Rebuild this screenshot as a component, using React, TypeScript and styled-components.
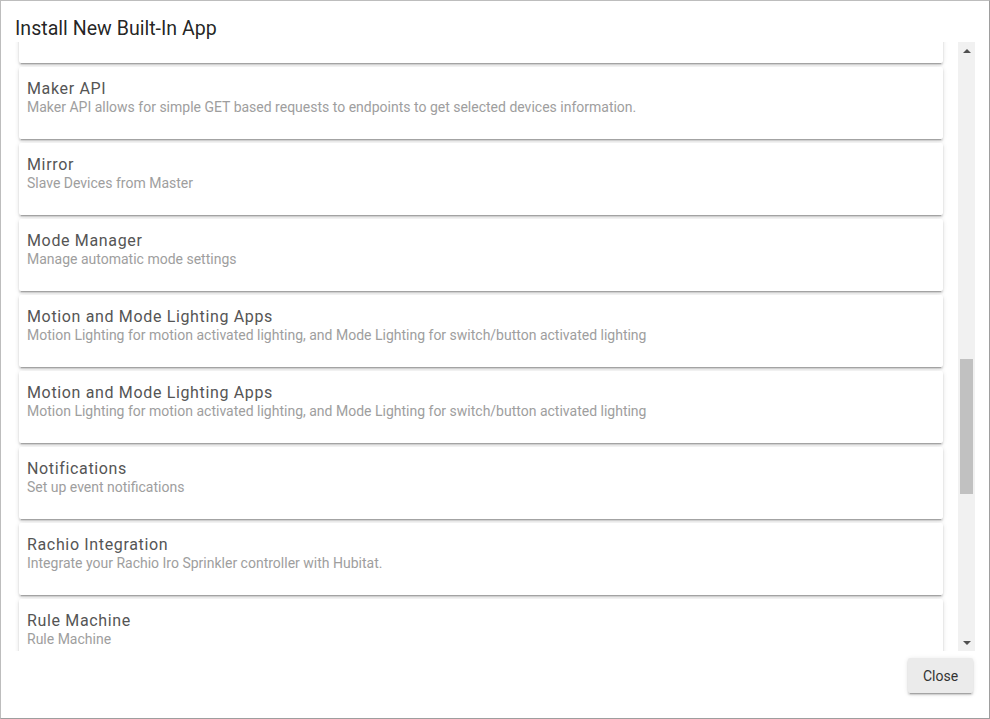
import { useLayoutEffect, useRef, useState } from "react";
import styled, { createGlobalStyle } from "styled-components";

type BuiltInApp = {
  name: string;
  description: string;
};

const apps: BuiltInApp[] = [
  { name: "Amazon Echo Skill", description: "Integrate Hubitat with Amazon Echo devices" },
  { name: "Average Temperature", description: "Average the readings of several temperature sensors" },
  { name: "Button Controllers", description: "Control devices with buttons" },
  { name: "Chromecast Integration", description: "Discover and control Chromecast devices" },
  { name: "Color Temperature Adjustment", description: "Adjust color temperature of bulbs during the day" },
  { name: "Ecobee Integration", description: "Connect your Ecobee thermostats" },
  { name: "Google Home", description: "Integrate Hubitat with Google Home" },
  { name: "Groups and Scenes", description: "Create groups of devices and scenes" },
  { name: "Hubitat Dashboard", description: "Create dashboards to control your devices" },
  { name: "Hubitat Safety Monitor", description: "Monitor intrusion, smoke and water leaks" },
  { name: "Hub Link", description: "Send device events to another hub" },
  { name: "IFTTT Integration", description: "Connect Hubitat with IFTTT" },
  { name: "LIFX Integration", description: "Discover and control LIFX bulbs" },
  { name: "Link to Hub", description: "Receive device events from another hub" },
  { name: "Lock Code Manager", description: "Manage lock codes for your locks" },
  { name: "Lutron Integration", description: "Connect your Lutron bridge" },
  { name: "Lighting Overrides", description: "Override lighting levels by mode" },
  { name: "Location Events", description: "Log sunrise, sunset and mode events" },
  {
    name: "Maker API",
    description:
      "Maker API allows for simple GET based requests to endpoints to get selected devices information.",
  },
  { name: "Mirror", description: "Slave Devices from Master" },
  { name: "Mode Manager", description: "Manage automatic mode settings" },
  {
    name: "Motion and Mode Lighting Apps",
    description:
      "Motion Lighting for motion activated lighting, and Mode Lighting for switch/button activated lighting",
  },
  {
    name: "Motion and Mode Lighting Apps",
    description:
      "Motion Lighting for motion activated lighting, and Mode Lighting for switch/button activated lighting",
  },
  { name: "Notifications", description: "Set up event notifications" },
  { name: "Rachio Integration", description: "Integrate your Rachio Iro Sprinkler controller with Hubitat." },
  { name: "Rule Machine", description: "Rule Machine" },
  { name: "Safety Monitor", description: "Security and safety alerts" },
  { name: "Simple Automation Rules", description: "Simple rules for everyday automations" },
  { name: "Sonos Integration", description: "Discover and control Sonos speakers" },
  { name: "Thermostat Controller", description: "Control a thermostat from several sensors" },
  { name: "Thermostat Scheduler", description: "Schedule thermostat set points" },
  { name: "Visual Rules Builder", description: "Build rules visually" },
  { name: "Weather Alerts", description: "Get notified about weather conditions" },
  { name: "Zone Motion Controllers", description: "Combine motion sensors into zones" },
];

const FIRST_VISIBLE = "Maker API";
const FIRST_VISIBLE_TOP = 25;

const GlobalStyle = createGlobalStyle`
  html, body {
    margin: 0;
    padding: 0;
    background: #fafafa;
    font-family: Roboto, "Liberation Sans", Arial, sans-serif;
  }
  * {
    box-sizing: border-box;
  }
`;

const Dialog = styled.div`
  width: 990px;
  height: 719px;
  display: flex;
  flex-direction: column;
  background: #fff;
  border: 1px solid #bdbdbd;
  border-right-color: #9e9e9e;
  border-bottom-color: #9e9e9e;
  overflow: hidden;
`;

const Title = styled.h2`
  margin: 0;
  padding: 16px 14px 0;
  height: 41px;
  font-size: 19.6px;
  font-weight: 400;
  line-height: 24px;
  color: rgba(0, 0, 0, 0.87);
`;

const Body = styled.div`
  flex: 1;
  min-height: 0;
  display: flex;
  padding: 0 14px;
`;

const List = styled.div`
  flex: 1;
  min-width: 0;
  overflow-y: scroll;
  scrollbar-width: none;
  padding: 4px 15px 0 4px;
  display: flex;
  flex-direction: column;
  gap: 4px;

  &::-webkit-scrollbar {
    display: none;
  }
`;

const Card = styled.div`
  flex: none;
  height: 72px;
  padding: 12px 8px 10px;
  background: #fff;
  border-radius: 2px;
  box-shadow: 0 3px 1px -2px rgba(0, 0, 0, 0.2), 0 2px 2px 0 rgba(0, 0, 0, 0.14),
    0 1px 5px 0 rgba(0, 0, 0, 0.12);
  cursor: pointer;
`;

const AppName = styled.div`
  font-size: 16px;
  line-height: 19px;
  letter-spacing: 0.65px;
  color: #555;
`;

const AppDescription = styled.div`
  font-size: 14px;
  line-height: 18px;
  color: #9e9e9e;
`;

const Track = styled.div`
  flex: none;
  width: 17px;
  display: flex;
  flex-direction: column;
  background: #f1f1f1;
`;

const ArrowButton = styled.div`
  flex: none;
  height: 17px;
  display: flex;
  align-items: center;
  justify-content: center;
`;

const Arrow = styled.span<{ $down?: boolean }>`
  width: 0;
  height: 0;
  border-left: 4px solid transparent;
  border-right: 4px solid transparent;
  ${({ $down }) =>
    $down ? "border-top: 4px solid #505050;" : "border-bottom: 4px solid #505050;"}
`;

const ThumbArea = styled.div`
  flex: 1;
  position: relative;
`;

const Thumb = styled.div`
  position: absolute;
  left: 2px;
  right: 2px;
  background: #c1c1c1;
`;

const Footer = styled.div`
  flex: none;
  height: 67px;
  display: flex;
  justify-content: flex-end;
  align-items: flex-start;
  padding: 7px 16px 0;
`;

const CloseButton = styled.button`
  width: 65px;
  height: 35px;
  border: none;
  border-radius: 2px;
  background: #ebebeb;
  color: #333;
  font-family: Roboto, "Liberation Sans", Arial, sans-serif;
  font-size: 14px;
  cursor: pointer;
  box-shadow: 0 3px 1px -2px rgba(0, 0, 0, 0.2), 0 2px 2px 0 rgba(0, 0, 0, 0.14),
    0 1px 5px 0 rgba(0, 0, 0, 0.12);
`;

export default function App() {
  const listRef = useRef<HTMLDivElement | null>(null);
  const anchorRef = useRef<HTMLDivElement | null>(null);
  const [scroll, setScroll] = useState({ top: 0, client: 1, total: 1 });

  const measure = () => {
    const list = listRef.current;
    if (!list) return;
    setScroll({ top: list.scrollTop, client: list.clientHeight, total: list.scrollHeight });
  };

  useLayoutEffect(() => {
    const list = listRef.current;
    const anchor = anchorRef.current;
    if (list && anchor) {
      list.scrollTop = anchor.offsetTop - list.offsetTop - FIRST_VISIBLE_TOP;
    }
    measure();
  }, []);

  const trackHeight = Math.max(scroll.client - 34, 0);
  const thumbHeight = (trackHeight * scroll.client) / scroll.total;
  const thumbTop = (trackHeight * scroll.top) / scroll.total;

  return (
    <>
      <GlobalStyle />
      <Dialog>
        <Title>Install New Built-In App</Title>
        <Body>
          <List ref={listRef} onScroll={measure}>
            {apps.map((app, index) => (
              <Card key={index} ref={app.name === FIRST_VISIBLE ? anchorRef : undefined}>
                <AppName>{app.name}</AppName>
                <AppDescription>{app.description}</AppDescription>
              </Card>
            ))}
          </List>
          <Track>
            <ArrowButton>
              <Arrow />
            </ArrowButton>
            <ThumbArea>
              <Thumb style={{ top: thumbTop, height: thumbHeight }} />
            </ThumbArea>
            <ArrowButton>
              <Arrow $down />
            </ArrowButton>
          </Track>
        </Body>
        <Footer>
          <CloseButton type="button">Close</CloseButton>
        </Footer>
      </Dialog>
    </>
  );
}
